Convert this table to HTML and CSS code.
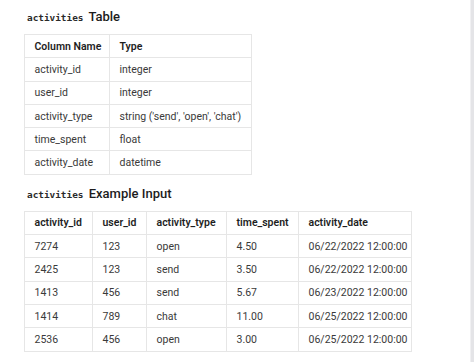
FILE: index.html
```html
<!DOCTYPE html>
<html>
<head>
<meta charset="utf-8">
<link rel="stylesheet" href="styles.css">
</head>
<body>
<div class="page">
  <main class="content">
    <h2 class="title"><code class="mono">activities</code> Table</h2>
    <table class="grid schema">
      <colgroup><col class="s1"><col class="s2"></colgroup>
      <thead>
        <tr><th>Column Name</th><th>Type</th></tr>
      </thead>
      <tbody>
        <tr><td>activity_id</td><td>integer</td></tr>
        <tr><td>user_id</td><td>integer</td></tr>
        <tr><td>activity_type</td><td>string ('send', 'open', 'chat')</td></tr>
        <tr><td>time_spent</td><td>float</td></tr>
        <tr><td>activity_date</td><td>datetime</td></tr>
      </tbody>
    </table>
    <h2 class="title second"><code class="mono">activities</code> Example Input</h2>
    <table class="grid example">
      <colgroup><col class="e1"><col class="e2"><col class="e3"><col class="e4"><col class="e5"></colgroup>
      <thead>
        <tr><th>activity_id</th><th>user_id</th><th>activity_type</th><th>time_spent</th><th>activity_date</th></tr>
      </thead>
      <tbody>
        <tr><td>7274</td><td>123</td><td>open</td><td>4.50</td><td>06/22/2022 12:00:00</td></tr>
        <tr><td>2425</td><td>123</td><td>send</td><td>3.50</td><td>06/22/2022 12:00:00</td></tr>
        <tr><td>1413</td><td>456</td><td>send</td><td>5.67</td><td>06/23/2022 12:00:00</td></tr>
        <tr><td>1414</td><td>789</td><td>chat</td><td>11.00</td><td>06/25/2022 12:00:00</td></tr>
        <tr><td>2536</td><td>456</td><td>open</td><td>3.00</td><td>06/25/2022 12:00:00</td></tr>
      </tbody>
    </table>
  </main>
  <div class="scrollbar"></div>
</div>
</body>
</html>
```
FILE: styles.css
```css
html, body {
  margin: 0;
  padding: 0;
  background: #ffffff;
}
.page {
  display: flex;
  width: 474px;
  height: 362px;
  overflow: hidden;
}
.content {
  flex: 1;
  padding: 8px 0 0 24px;
  font-family: Roboto, "Noto Sans", sans-serif;
  color: #2b2b2b;
}
.scrollbar {
  width: 3px;
  background: #e4e4e7;
  border-left: 1px solid #f0f0f2;
}
.title {
  margin: 0 0 0 3px;
  font-family: Roboto, sans-serif;
  font-size: 13px;
  font-weight: 500;
  line-height: 18px;
  color: #1c1c1c;
  height: 26px;
}
.title.second {
  margin-top: 10px;
}
.mono {
  font-family: "DejaVu Sans Mono", "Liberation Mono", monospace;
  font-size: 9.4px;
  font-weight: bold;
  color: #2a2a2a;
  margin-right: 2px;
}
.grid {
  border-collapse: collapse;
  table-layout: fixed;
  font-size: 10.5px;
  color: #3a3a3a;
}
.schema { width: 227px; }
.example { width: 387px; }
.s1 { width: 85px; }
.s2 { width: 142px; }
.e1 { width: 68px; }
.e2 { width: 54px; }
.e3 { width: 80px; }
.e4 { width: 72px; }
.e5 { width: 113px; }
.grid th, .grid td {
  border: 1px solid #e6e6e6;
  text-align: left;
  padding: 0 6px 0 9.5px;
  height: 22.3px;
  white-space: nowrap;
}
.grid th {
  font-weight: 600;
  color: #1e1e1e;
}
```
